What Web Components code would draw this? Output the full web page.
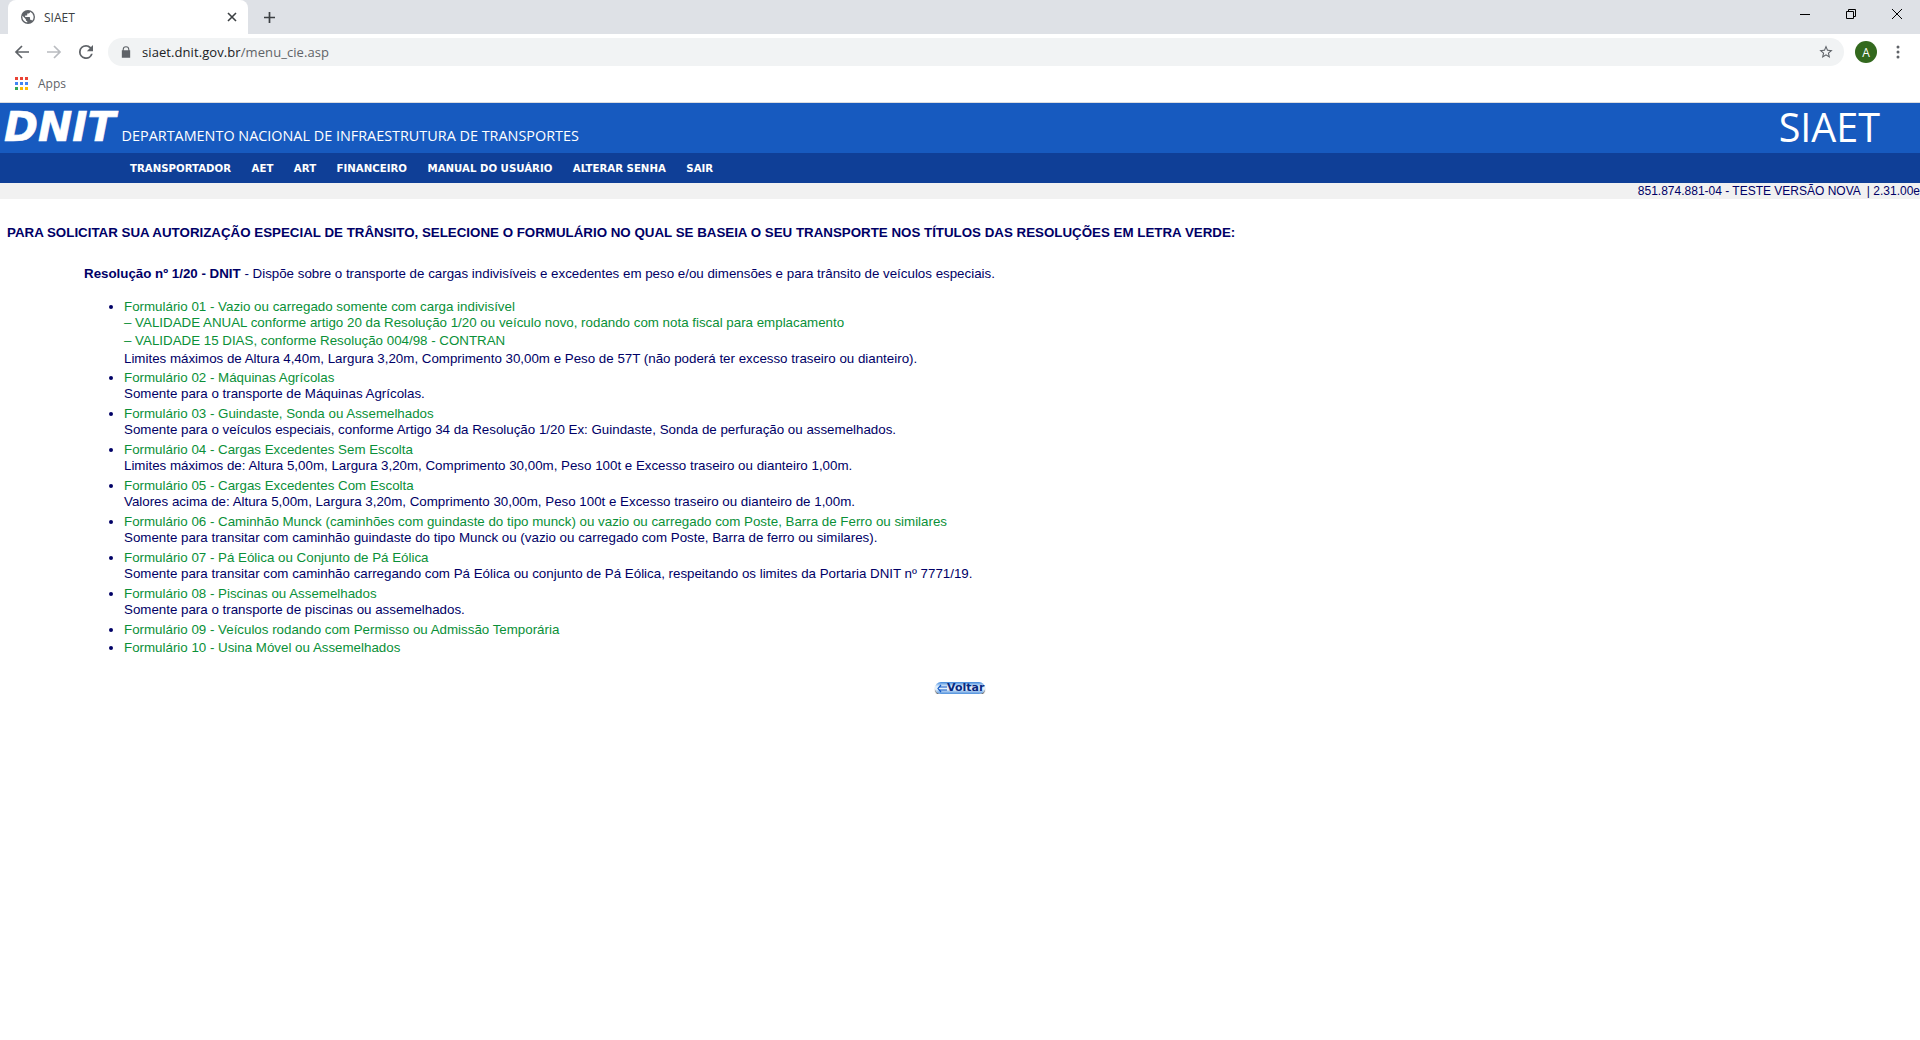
<!DOCTYPE html>
<html lang="pt-BR">
<head>
<meta charset="utf-8">
<title>SIAET</title>
<style>
  html, body { margin: 0; padding: 0; background: #fff; }
  body { font-family: "Liberation Sans", Arial, sans-serif; color: #000066; }
</style>
</head>
<body>
<browser-frame url-host="siaet.dnit.gov.br" url-path="/menu_cie.asp" tab-title="SIAET"></browser-frame>
<siaet-header></siaet-header>
<siaet-nav>
  <nav-link>TRANSPORTADOR</nav-link>
  <nav-link>AET</nav-link>
  <nav-link>ART</nav-link>
  <nav-link>FINANCEIRO</nav-link>
  <nav-link>MANUAL DO USUÁRIO</nav-link>
  <nav-link>ALTERAR SENHA</nav-link>
  <nav-link>SAIR</nav-link>
</siaet-nav>
<status-strip>851.874.881-04 - TESTE VERSÃO NOVA &nbsp;| 2.31.00e</status-strip>
<form-menu>
  <span slot="heading">PARA SOLICITAR SUA AUTORIZAÇÃO ESPECIAL DE TRÂNSITO, SELECIONE O FORMULÁRIO NO QUAL SE BASEIA O SEU TRANSPORTE NOS TÍTULOS DAS RESOLUÇÕES EM LETRA VERDE:</span>
  <span slot="resolution"><b>Resolução nº 1/20 - DNIT</b> - Dispõe sobre o transporte de cargas indivisíveis e excedentes em peso e/ou dimensões e para trânsito de veículos especiais.</span>
  <form-item class="first">
    <span slot="title">Formulário 01 - Vazio ou carregado somente com carga indivisível</span>
    <span slot="extra">– VALIDADE ANUAL conforme artigo 20 da Resolução 1/20 ou veículo novo, rodando com nota fiscal para emplacamento</span>
    <span slot="extra">– VALIDADE 15 DIAS, conforme Resolução 004/98 - CONTRAN</span>
    Limites máximos de Altura 4,40m, Largura 3,20m, Comprimento 30,00m e Peso de 57T (não poderá ter excesso traseiro ou dianteiro).
  </form-item>
  <form-item>
    <span slot="title">Formulário 02 - Máquinas Agrícolas</span>
    Somente para o transporte de Máquinas Agrícolas.
  </form-item>
  <form-item>
    <span slot="title">Formulário 03 - Guindaste, Sonda ou Assemelhados</span>
    Somente para o veículos especiais, conforme Artigo 34 da Resolução 1/20 Ex: Guindaste, Sonda de perfuração ou assemelhados.
  </form-item>
  <form-item>
    <span slot="title">Formulário 04 - Cargas Excedentes Sem Escolta</span>
    Limites máximos de: Altura 5,00m, Largura 3,20m, Comprimento 30,00m, Peso 100t e Excesso traseiro ou dianteiro 1,00m.
  </form-item>
  <form-item>
    <span slot="title">Formulário 05 - Cargas Excedentes Com Escolta</span>
    Valores acima de: Altura 5,00m, Largura 3,20m, Comprimento 30,00m, Peso 100t e Excesso traseiro ou dianteiro de 1,00m.
  </form-item>
  <form-item>
    <span slot="title">Formulário 06 - Caminhão Munck (caminhões com guindaste do tipo munck) ou vazio ou carregado com Poste, Barra de Ferro ou similares</span>
    Somente para transitar com caminhão guindaste do tipo Munck ou (vazio ou carregado com Poste, Barra de ferro ou similares).
  </form-item>
  <form-item>
    <span slot="title">Formulário 07 - Pá Eólica ou Conjunto de Pá Eólica</span>
    Somente para transitar com caminhão carregando com Pá Eólica ou conjunto de Pá Eólica, respeitando os limites da Portaria DNIT nº 7771/19.
  </form-item>
  <form-item>
    <span slot="title">Formulário 08 - Piscinas ou Assemelhados</span>
    Somente para o transporte de piscinas ou assemelhados.
  </form-item>
  <form-item class="single">
    <span slot="title">Formulário 09 - Veículos rodando com Permisso ou Admissão Temporária</span>
  </form-item>
  <form-item class="single">
    <span slot="title">Formulário 10 - Usina Móvel ou Assemelhados</span>
  </form-item>
  <back-button slot="back">Voltar</back-button>
</form-menu>

<script>
const define = (name, html, init) => {
  const template = document.createElement('template');
  template.innerHTML = html;
  customElements.define(name, class extends HTMLElement {
    constructor() {
      super();
      this.root = this.attachShadow({mode: 'open'});
      this.root.appendChild(template.content.cloneNode(true));
    }
    connectedCallback() {
      if (init) init(this, this.root);
    }
  });
};

define('browser-frame', `
  <style>
    :host { display: block; font-family: "Open Sans", "Noto Sans", sans-serif; background: #fff; }
    svg { display: block; flex: none; }
    .strip { height: 34px; background: #dee1e6; display: flex; align-items: stretch; padding-left: 8px; }
    .tab { width: 240px; background: #fff; border-radius: 8px 8px 0 0; display: flex; align-items: center; box-sizing: border-box; padding-left: 13px; }
    .tab .name { margin-left: 9px; font-size: 12px; color: #3c4043; flex: 1; }
    .tab .close { margin-right: 11px; }
    .plus { margin: 11px 0 0 15px; }
    .winctl { margin-left: auto; display: flex; padding: 6px 15px 0 0; gap: 30px; height: 16px; }
    .toolbar { height: 36px; display: flex; align-items: center; }
    .navbtns { width: 108px; display: flex; padding-left: 14px; box-sizing: border-box; gap: 16px; }
    .omni { width: 1736px; height: 28px; background: #f1f3f4; border-radius: 14px; display: flex; align-items: center; box-sizing: border-box; padding: 0 10px 0 13px; }
    .url { margin-left: 11px; flex: 1; font-size: 13px; color: #5f6368; letter-spacing: .08px; }
    .url b { font-weight: 400; color: #202124; }
    .avatar { width: 22px; height: 22px; border-radius: 50%; background: #33691e; color: #fff; font-size: 12px; display: flex; align-items: center; justify-content: center; margin-left: 11px; }
    .kebab { margin-left: 19px; }
    .marks { height: 26px; padding-bottom: 6px; border-bottom: 1px solid #dadce0; display: flex; align-items: center; padding-left: 15px; }
    .marks span { margin-left: 10px; font-size: 12px; color: #5f6368; }
  </style>
  <div class="strip">
    <div class="tab">
      <svg width="14" height="14" viewBox="0 0 24 24"><path fill="#5f6368" d="M12 0a12 12 0 1 0 0 24 12 12 0 0 0 0-24zm-1.3 21.500A9.600 9.600 0 0 1 2.600 10l5.700 5.700v1.200c0 1.300 1.100 2.400 2.400 2.400v2.200zm8.300-3a2.400 2.400 0 0 0-2.300-1.700h-1.200v-3.600c0-.7-.5-1.200-1.200-1.200H7.100V9.600h2.400c.7 0 1.200-.5 1.200-1.200V6h2.400c1.300 0 2.400-1.100 2.400-2.400v-.5a9.600 9.600 0 0 1 3.500 15.400z"/></svg>
      <span class="name"></span>
      <svg class="close" width="10" height="10" viewBox="0 0 10 10"><path stroke="#3c4043" stroke-width="1.600" d="M1 1l8 8M9 1l-8 8"/></svg>
    </div>
    <svg class="plus" width="13" height="13" viewBox="0 0 13 13"><path stroke="#3c4043" stroke-width="1.700" d="M6.500 1v11M1 6.500h11"/></svg>
    <div class="winctl">
      <svg width="16" height="16" viewBox="0 0 16 16"><path stroke="#000" d="M3 8.500h10"/></svg>
      <svg width="16" height="16" viewBox="0 0 16 16"><path fill="none" stroke="#000" d="M3.500 5.500h7v7h-7zM5.500 5.500v-2h7v7h-2"/></svg>
      <svg width="16" height="16" viewBox="0 0 16 16"><path stroke="#000" d="M3 3l10 10M13 3L3 13"/></svg>
    </div>
  </div>
  <div class="toolbar">
    <div class="navbtns">
      <svg width="16" height="16" viewBox="0 0 16 16"><path fill="none" stroke="#5f6368" stroke-width="1.700" d="M15 8H2M8 2L2 8l6 6"/></svg>
      <svg width="16" height="16" viewBox="0 0 16 16"><path fill="none" stroke="#b9bcc0" stroke-width="1.700" d="M1 8h13M8 2l6 6-6 6"/></svg>
      <svg width="14" height="14" style="margin:1px" viewBox="0 0 24 24"><path fill="#5f6368" d="M20.500 3.500A11.900 11.900 0 0 0 12 0a12 12 0 1 0 11.600 15h-3.100A9 9 0 1 1 12 3c2.500 0 4.700 1 6.300 2.700L13.500 10.500H24V0z"/></svg>
    </div>
    <div class="omni">
      <svg width="10" height="12" viewBox="0 0 12 14"><path fill="#5f6368" d="M10 5V4a4 4 0 0 0-8 0v1H1v9h10V5h-1zM3.300 5V4a2.700 2.700 0 0 1 5.400 0v1H3.300z"/></svg>
      <span class="url"><b class="host"></b><span class="path"></span></span>
      <svg width="16" height="16" viewBox="0 0 24 24"><path fill="#5f6368" d="M22 9.240l-7.190-.62L12 2 9.190 8.630 2 9.240l5.460 4.730L5.820 21 12 17.270 18.180 21l-1.630-7.030L22 9.240zM12 15.400l-3.760 2.270 1-4.280-3.320-2.880 4.380-.38L12 6.100l1.710 4.040 4.380.38-3.320 2.880 1 4.280L12 15.400z"/></svg>
    </div>
    <div class="avatar">A</div>
    <svg class="kebab" width="4" height="14" viewBox="0 0 4 14"><g fill="#5f6368"><circle cx="2" cy="2" r="1.500"/><circle cx="2" cy="7" r="1.500"/><circle cx="2" cy="12" r="1.500"/></g></svg>
  </div>
  <div class="marks">
    <svg width="13" height="13" viewBox="0 0 13 13">
      <g fill="#ea4335"><rect width="3" height="3"/><rect x="5" width="3" height="3"/><rect x="10" width="3" height="3"/></g>
      <g><rect y="5" width="3" height="3" fill="#4285f4"/><rect x="5" y="5" width="3" height="3" fill="#4285f4"/><rect x="10" y="5" width="3" height="3" fill="#4285f4"/></g>
      <g><rect y="10" width="3" height="3" fill="#34a853"/><rect x="5" y="10" width="3" height="3" fill="#fbbc04"/><rect x="10" y="10" width="3" height="3" fill="#fbbc04"/></g>
    </svg>
    <span>Apps</span>
  </div>
`, (el, root) => {
  root.querySelector('.name').textContent = el.getAttribute('tab-title');
  root.querySelector('.host').textContent = el.getAttribute('url-host');
  root.querySelector('.path').textContent = el.getAttribute('url-path');
});

define('siaet-header', `
  <style>
    :host { display: flex; height: 50px; background: #175abf; color: #fff; box-sizing: border-box; align-items: flex-end; }
    .logo { font: italic 700 41px "DejaVu Sans", sans-serif; line-height: 48px; margin: 0 0 2px 4px; -webkit-text-stroke: .6px #fff; }
    .dept { font: 14.4px "Open Sans", sans-serif; line-height: 20px; margin: 0 0 7px 6px; }
    .sys { margin-left: auto; font: 39.5px "Open Sans", sans-serif; line-height: 48px; margin: 0 40px 2px auto; }
  </style>
  <span class="logo">DNIT</span>
  <span class="dept">DEPARTAMENTO NACIONAL DE INFRAESTRUTURA DE TRANSPORTES</span>
  <span class="sys">SIAET</span>
`);

define('siaet-nav', `
  <style>
    :host { display: flex; height: 30px; background: #0f3f97; align-items: center; padding-left: 130px; gap: 20.500px; }
  </style>
  <slot></slot>
`);

define('nav-link', `
  <style>
    :host { display: block; color: #fff; font: 700 10.200px "DejaVu Sans", Verdana, sans-serif; white-space: nowrap; }
  </style>
  <slot></slot>
`);

define('status-strip', `
  <style>
    :host { display: block; height: 16px; background: #f1f1f1; color: #000066; font: 12px/16px "Liberation Sans", Arial, sans-serif; text-align: right; white-space: nowrap; }
  </style>
  <slot></slot>
`);

define('form-menu', `
  <style>
    :host { display: block; color: #000066; font: 13.330px/16px "Liberation Sans", Arial, sans-serif; }
    .heading { font-weight: 700; line-height: 18px; padding: 25px 0 0 7px; white-space: nowrap; }
    .resolution { padding: 24px 0 0 84px; white-space: nowrap; }
    ul { margin: 17px 0 0; padding: 0 0 0 124px; }
    .back { display: flex; justify-content: center; padding-top: 24px; }
  </style>
  <div class="heading"><slot name="heading"></slot></div>
  <div class="resolution"><slot name="resolution"></slot></div>
  <ul><slot></slot></ul>
  <div class="back"><slot name="back"></slot></div>
`);

define('form-item', `
  <style>
    :host { display: list-item; list-style: disc outside; color: #000066; margin-bottom: 4px; white-space: nowrap; }
    :host(.single) { margin-bottom: 2px; }
    :host(.first) { margin-bottom: 3px; }
    :host(.first) .title { line-height: 15px; }
    .title, .extra { display: block; color: #0a9038; }
    ::slotted([slot="extra"]) { display: block; line-height: 18px; }
    ::slotted([slot="extra"]:last-of-type) { margin-bottom: 1px; }
  </style>
  <span class="title"><slot name="title"></slot></span>
  <span class="extra"><slot name="extra"></slot></span>
  <slot></slot>
`);

define('back-button', `
  <style>
    :host { display: flex; align-items: center; width: 50px; height: 12px; box-sizing: border-box; border-radius: 6px; background: linear-gradient(#3f86da, #d9ebfc 35%, #e8f3fd 60%, #4d8fdc); box-shadow: 0 1.500px 1px #666; color: #08297f; font: 700 11px/12px "DejaVu Sans", sans-serif; padding-left: 2px; }
    svg { flex: none; }
  </style>
  <svg width="10" height="9" viewBox="0 0 10 9"><path fill="none" stroke="#1057c4" stroke-width="1.200" d="M10 3H2M10 6H2M4 .8L1 4.500 4 8.200"/></svg>
  <slot></slot>
`);
</script>
</body>
</html>
